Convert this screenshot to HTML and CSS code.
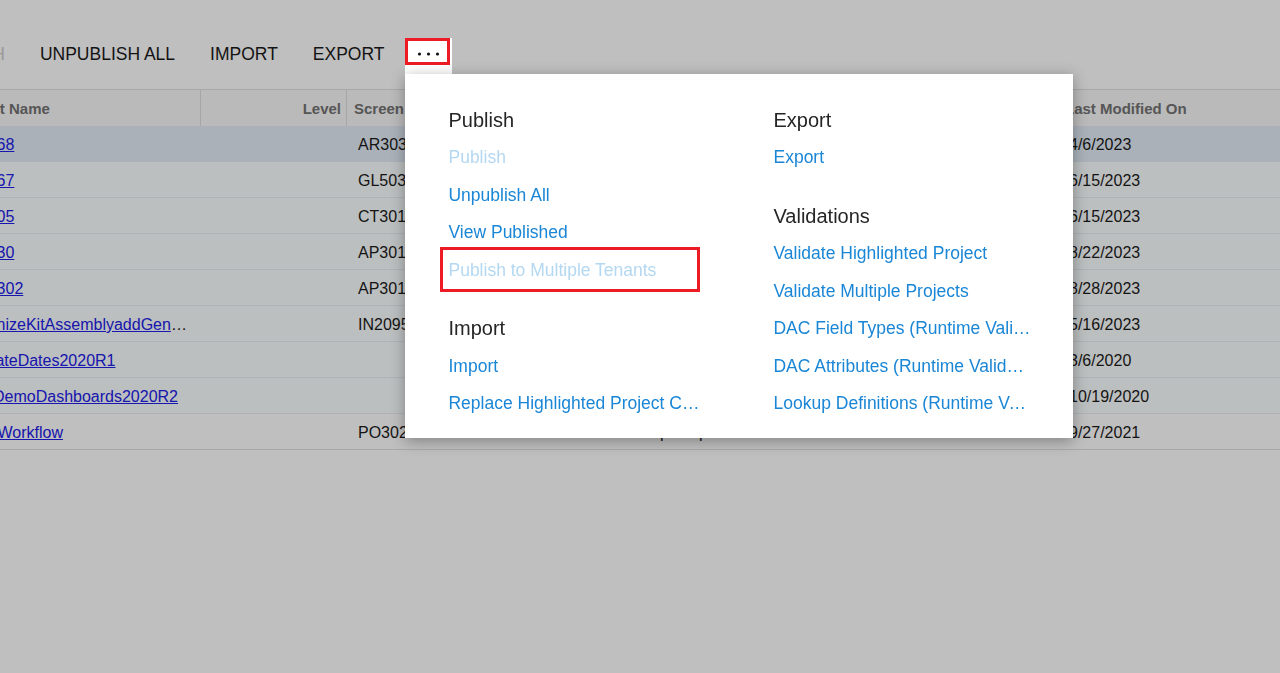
FILE: index.html
```html
<!DOCTYPE html>
<html lang="en">
<head>
<meta charset="utf-8">
<title>Customization Projects</title>
<link rel="stylesheet" href="styles.css">
</head>
<body>
<div class="page">
  <div class="toolbar">
    <span class="tb-item disabled">PUBLISH</span>
    <span class="tb-item">UNPUBLISH ALL</span>
    <span class="tb-item">IMPORT</span>
    <span class="tb-item">EXPORT</span>
    <div class="tb-more">
      <div class="tb-more-box">
        <svg width="39" height="21" viewBox="0 0 39 21"><circle cx="11.5" cy="13" r="1.6"/><circle cx="20.5" cy="13" r="1.6"/><circle cx="29.5" cy="13" r="1.6"/></svg>
      </div>
      <div class="menu">
        <div class="menu-col">
          <div class="group">
            <div class="m-head">Publish</div>
            <div class="m-item off">Publish</div>
            <div class="m-item">Unpublish All</div>
            <div class="m-item">View Published</div>
            <div class="m-item off marked">Publish to Multiple Tenants<span class="annot"></span></div>
          </div>
          <div class="group">
            <div class="m-head">Import</div>
            <div class="m-item">Import</div>
            <div class="m-item">Replace Highlighted Project Content</div>
          </div>
        </div>
        <div class="menu-col">
          <div class="group">
            <div class="m-head">Export</div>
            <div class="m-item">Export</div>
          </div>
          <div class="group">
            <div class="m-head">Validations</div>
            <div class="m-item">Validate Highlighted Project</div>
            <div class="m-item">Validate Multiple Projects</div>
            <div class="m-item">DAC Field Types (Runtime Validation)</div>
            <div class="m-item">DAC Attributes (Runtime Validation)</div>
            <div class="m-item">Lookup Definitions (Runtime Validation)</div>
          </div>
        </div>
      </div>
    </div>
  </div>

  <div class="grid">
    <div class="row head">
      <div class="hc first">Project Name</div>
      <div class="hc num">Level</div>
      <div class="hc">Screen Names</div>
      <div class="hc">Description</div>
      <div class="hc">Last Modified By</div>
      <div class="hc last">Last Modified On</div>
    </div>
    <div class="row sel">
      <div class="c"><a href="#">Build68</a></div><div class="c num"></div><div class="c">AR303000</div><div class="c">Customers</div><div class="c">admin admin</div><div class="c">4/6/2023</div>
    </div>
    <div class="row mod">
      <div class="c"><a href="#">Build67</a></div><div class="c num"></div><div class="c">GL503000</div><div class="c">Release Transactions</div><div class="c">admin admin</div><div class="c">6/15/2023</div>
    </div>
    <div class="row mod">
      <div class="c"><a href="#">Build05</a></div><div class="c num"></div><div class="c">CT301000</div><div class="c">Contracts</div><div class="c">admin admin</div><div class="c">6/15/2023</div>
    </div>
    <div class="row mod">
      <div class="c"><a href="#">Build30</a></div><div class="c num"></div><div class="c">AP301000</div><div class="c">Bills and Adjustments</div><div class="c">admin admin</div><div class="c">8/22/2023</div>
    </div>
    <div class="row mod">
      <div class="c"><a href="#">Build302</a></div><div class="c num"></div><div class="c">AP301000</div><div class="c">Bills and Adjustments</div><div class="c">admin admin</div><div class="c">8/28/2023</div>
    </div>
    <div class="row mod">
      <div class="c"><a href="#">OrganizeKitAssemblyaddGenericInquiry</a></div><div class="c num"></div><div class="c">IN209500</div><div class="c">Kit Assembly</div><div class="c">admin admin</div><div class="c">5/16/2023</div>
    </div>
    <div class="row mod">
      <div class="c"><a href="#">ValidateDates2020R1</a></div><div class="c num"></div><div class="c"></div><div class="c"></div><div class="c">admin admin</div><div class="c">3/6/2020</div>
    </div>
    <div class="row mod">
      <div class="c"><a href="#">NewDemoDashboards2020R2</a></div><div class="c num"></div><div class="c"></div><div class="c"></div><div class="c">admin admin</div><div class="c">10/19/2020</div>
    </div>
    <div class="row plain">
      <div class="c"><a href="#">AuditWorkflow</a></div><div class="c num"></div><div class="c">PO302000</div><div class="c">Purchase Receipt Inspection Sheet</div><div class="c">admin admin</div><div class="c">9/27/2021</div>
    </div>
  </div>
</div>
<div class="backdrop"></div>
</body>
</html>
```

FILE: styles.css
```css
html, body {
  margin: 0;
  padding: 0;
  background: #ffffff;
  overflow: hidden;
}

body {
  font-family: "Liberation Sans", Arial, sans-serif;
  color: #1b1b1b;
  width: 1280px;
  height: 673px;
}

.page {
  width: 1280px;
}

/* toolbar */
.toolbar {
  display: flex;
  align-items: flex-start;
  gap: 35px;
  height: 89px;
  box-sizing: border-box;
  padding-top: 38px;
  margin-left: -70px;
}

.tb-item {
  font-size: 17.5px;
  line-height: 33px;
  color: #1a1a1a;
  white-space: nowrap;
}

.tb-item.disabled {
  color: #cdcdcd;
}

.tb-more {
  position: relative;
  z-index: 20;
  margin-left: -14px;
  width: 47px;
  height: 36px;
  background: #ffffff;
}

.tb-more-box {
  width: 45px;
  height: 27px;
  box-sizing: border-box;
  border: 3px solid #ed1c24;
}

.tb-more-box svg {
  display: block;
  fill: #111111;
}

/* dropdown menu */
.menu {
  position: absolute;
  left: 0;
  top: 100%;
  width: 668px;
  height: 364px;
  box-sizing: border-box;
  padding: 27.5px 43px 16px 43px;
  background: #ffffff;
  box-shadow: 0 3px 14px rgba(0, 0, 0, 0.32);
  display: grid;
  grid-template-columns: 325px 260px;
}

.group + .group {
  margin-top: 21px;
}

.m-head {
  font-size: 20px;
  line-height: 37.5px;
  color: #262626;
  white-space: nowrap;
}

.m-item {
  position: relative;
  font-size: 17.5px;
  line-height: 37.5px;
  color: #1a86d6;
  white-space: nowrap;
  overflow: hidden;
  text-overflow: ellipsis;
  max-width: 260px;
}

.m-item.off {
  color: #b4d8f2;
}

.m-item.marked {
  overflow: visible;
}

.annot {
  position: absolute;
  left: -8px;
  top: calc(50% - 23px);
  width: 260px;
  height: 45px;
  box-sizing: border-box;
  border: 3px solid #ed1c24;
}

/* grid */
.grid {
  margin-left: -50px;
  width: calc(100% + 50px);
}

.row {
  display: grid;
  grid-template-columns: 251px 146px 189px 383px 139px 1fr;
  height: 36px;
  box-sizing: border-box;
  font-size: 16px;
}

.row.head {
  border-top: 1px solid #e0e0e0;
  height: 37px;
  background: #f8f8f8;
}

.hc {
  font-size: 15px;
  font-weight: bold;
  color: #737373;
  line-height: 35px;
  padding: 1px 7px 0 7px;
  border-right: 1px solid #dedede;
  white-space: nowrap;
  overflow: hidden;
}

.hc.first {
  padding-left: 4px;
}

.hc.last {
  border-right: none;
}

.hc.num {
  text-align: right;
  padding-right: 5px;
}

.c {
  line-height: 32px;
  padding: 3px 11px 0 11px;
  white-space: nowrap;
  overflow: hidden;
  text-overflow: ellipsis;
}

.c.num {
  text-align: right;
  padding-right: 5px;
}

.c a {
  color: #2020e8;
  text-decoration: underline;
}

.row.sel {
  background: #e3edf7;
  border-bottom: 1px solid #e3edf7;
}

.row.mod {
  background: #fbffff;
  border-bottom: 1px solid #e8eff4;
}

.row.plain {
  background: #ffffff;
  border-bottom: 1px solid #e0e0e0;
}

/* modal backdrop */
.backdrop {
  position: fixed;
  inset: 0;
  background: rgba(0, 0, 0, 0.25);
  z-index: 10;
}
```
